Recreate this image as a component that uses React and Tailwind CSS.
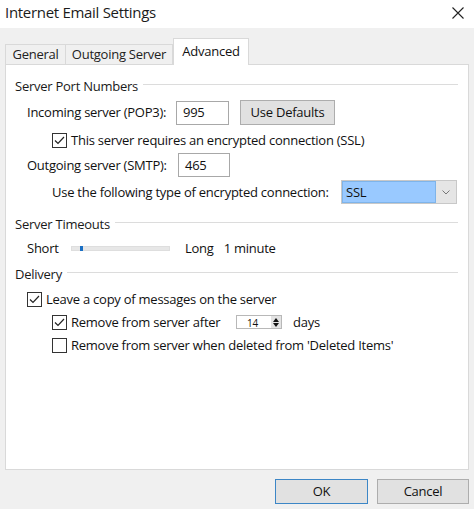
import React from 'react';

const Check = ({ checked }) => (
  <div className="w-[15px] h-[15px] border border-[#333333] bg-white flex items-center justify-center shrink-0">
    {checked && (
      <svg width="13" height="13" viewBox="0 0 13 13">
        <polyline points="2,6.5 5,9.5 11,3" fill="none" stroke="#222222" strokeWidth="1.2" />
      </svg>
    )}
  </div>
);

const GroupHeader = ({ title, className }) => (
  <div className={`flex items-center h-[20px] ${className}`}>
    <span className="text-[#1a1a1a] whitespace-nowrap">{title}</span>
    <div className="flex-1 h-px bg-[#dcdcdc] ml-[5px] mt-[-3px]" />
  </div>
);

export default function App() {
  return (
    <div
      className="w-[474px] h-[509px] bg-[#f0f0f0] overflow-hidden text-[13px] tracking-[-0.25px] leading-none text-[#111111] whitespace-nowrap"
      style={{ fontFamily: '"Open Sans", "Noto Sans", sans-serif' }}
    >
      {/* title bar */}
      <div className="h-[28px] bg-white flex items-center justify-between pl-[5px] pr-[10px] pb-[3px]">
        <span className="text-[15px] tracking-[-0.3px] text-[#1b1b1b]">Internet Email Settings</span>
        <svg width="12" height="12" viewBox="0 0 12 12">
          <path d="M0.5 0.5 L11.5 11.5 M11.5 0.5 L0.5 11.5" stroke="#222222" strokeWidth="1.1" />
        </svg>
      </div>

      {/* tabs */}
      <div className="flex items-end ml-[5px] mt-[10px] h-[26px] relative z-10">
        <div className="w-[61px] h-[20px] border border-b-0 border-[#d9d9d9] flex items-center justify-center text-[#222222]">General</div>
        <div className="w-[107px] h-[20px] border border-l-0 border-b-0 border-[#d9d9d9] flex items-center justify-center text-[#222222]">Outgoing Server</div>
        <div className="w-[76px] h-[27px] -mb-px bg-white border border-b-0 border-[#d9d9d9] flex items-center justify-center pb-[2px] text-[#111111]">Advanced</div>
      </div>

      {/* panel */}
      <div className="ml-[5px] w-[464px] h-[406px] bg-white border border-[#d9d9d9] pl-[9px] pr-[10px]">
        <GroupHeader title="Server Port Numbers" className="mt-[11px]" />

        <div className="flex items-center h-[25px] mt-[4px] pl-[12px]">
          <span className="w-[149px]">Incoming server (POP3):</span>
          <div className="w-[53px] h-[24px] border border-[#a8a8a8] flex items-center pl-[6px]">995</div>
          <div className="ml-[11px] w-[95px] h-[25px] bg-[#e1e1e1] border border-[#adadad] flex items-center justify-center">Use Defaults</div>
        </div>

        <div className="flex items-center h-[16px] mt-[7px] pl-[37px]">
          <Check checked />
          <span className="ml-[4px]">This server requires an encrypted connection (SSL)</span>
        </div>

        <div className="flex items-center h-[24px] mt-[5px] pl-[12px]">
          <span className="w-[151px]">Outgoing server (SMTP):</span>
          <div className="w-[52px] h-[24px] border border-[#a8a8a8] flex items-center pl-[6px]">465</div>
        </div>

        <div className="flex items-center h-[24px] mt-[3px] pl-[37px]">
          <span className="w-[289px]">Use the following type of encrypted connection:</span>
          <div className="flex h-[24px] w-[116px] border border-[#c8c8c8]">
            <div className="w-[94px] bg-[#99c9ff] border border-[#7eb4ea] flex items-center pl-[3px]">SSL</div>
            <div className="flex-1 bg-[#e5e5e5] flex items-center justify-center">
              <svg width="8" height="5" viewBox="0 0 8 5">
                <polyline points="0.5,0.5 4,4 7.5,0.5" fill="none" stroke="#777777" strokeWidth="1" />
              </svg>
            </div>
          </div>
        </div>

        <GroupHeader title="Server Timeouts" className="mt-[10px]" />

        <div className="flex items-center h-[20px] mt-[4px] pl-[12px]">
          <span className="w-[44px]">Short</span>
          <div className="relative w-[99px] h-[5px] bg-[#e7e7e7] border border-[#dedede]">
            <div className="absolute left-[8px] top-[-1px] w-[3px] h-[5px] bg-[#1a6fc4]" />
          </div>
          <span className="ml-[15px]">Long</span>
          <span className="ml-[10px]">1 minute</span>
        </div>

        <GroupHeader title="Delivery" className="mt-[6px]" />

        <div className="flex items-center h-[16px] mt-[7px] pl-[12px]">
          <Check checked />
          <span className="ml-[4px]">Leave a copy of messages on the server</span>
        </div>

        <div className="flex items-center h-[16px] mt-[7px] pl-[37px]">
          <Check checked />
          <span className="ml-[4px] w-[165px]">Remove from server after</span>
          <div className="flex h-[14px] w-[46px] border border-[#b8b8b8] overflow-hidden">
            <div className="flex-1 bg-white pl-[10px] text-[10px] leading-[10px] pt-[2px]">14</div>
            <div className="w-[10px] bg-[#e3e3e3] flex flex-col items-center justify-center gap-[1px]">
              <svg width="6" height="4" viewBox="0 0 6 4"><polygon points="3,0 6,4 0,4" fill="#111111" /></svg>
              <svg width="6" height="4" viewBox="0 0 6 4"><polygon points="0,0 6,0 3,4" fill="#111111" /></svg>
            </div>
          </div>
          <span className="ml-[11px]">days</span>
        </div>

        <div className="flex items-center h-[16px] mt-[7px] pl-[37px]">
          <Check />
          <span className="ml-[4px]">Remove from server when deleted from 'Deleted Items'</span>
        </div>
      </div>

      {/* buttons */}
      <div className="flex justify-end gap-[9px] mt-[9px] pr-[5px]">
        <div className="w-[93px] h-[25px] bg-[#e1e1e1] border border-[#3c86c6] flex items-center justify-center">OK</div>
        <div className="w-[92px] h-[25px] bg-[#e1e1e1] border border-[#adadad] flex items-center justify-center">Cancel</div>
      </div>
    </div>
  );
}
